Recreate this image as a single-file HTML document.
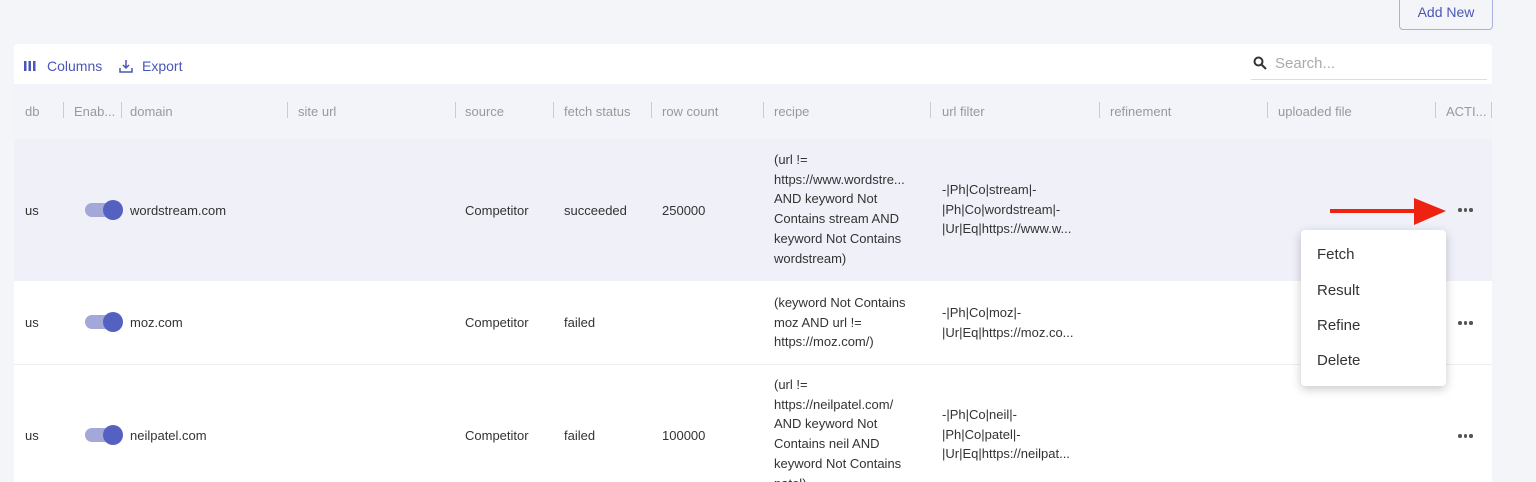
<!DOCTYPE html><html><head><style>
html,body{margin:0;width:1536px;height:482px;overflow:hidden}
body{background:#f4f5f9;font-family:"Liberation Sans",sans-serif;font-size:13px;color:#333;position:relative}
.a{position:absolute;white-space:nowrap}
.card{position:absolute;left:14px;top:44px;width:1478px;height:460px;background:#fff;border-radius:4px}
.hd{color:#999}
.sep{position:absolute;top:102px;width:1px;height:16px;background:#ccc}
.tg{position:absolute;width:36px;height:14px;border-radius:7px;background:#a3a8d8}
.tg:after{content:"";position:absolute;right:-2px;top:-3px;width:20px;height:20px;border-radius:50%;background:#5561c0}
.ml{position:absolute;line-height:19.7px;white-space:nowrap}
.dots{position:absolute;width:16px;height:4px}
.dots i{position:absolute;top:0;width:3.5px;height:3.5px;border-radius:50%;background:#555}
</style></head><body>
<div class="a" style="left:1399px;top:-4px;width:92px;height:32px;border:1px solid #aab0e0;border-radius:4px;color:#4a56b8;font-size:14px;text-align:center;line-height:30px;background:#f4f5f9">Add New</div>
<div class="card"></div>
<div class="a" style="left:14px;top:84px;width:1478px;height:55px;background:#f3f4f9"></div>
<div class="a" style="left:14px;top:139px;width:1478px;height:142px;background:#eff0f8"></div>
<div class="a" style="left:14px;top:364px;width:1478px;height:1px;background:#eee"></div>
<svg class="a" style="left:23px;top:60px" width="14" height="12"><rect x="1" y="1" width="2.5" height="10" fill="#4a56b8"/><rect x="5.5" y="1" width="2.5" height="10" fill="#4a56b8"/><rect x="10" y="1" width="2.5" height="10" fill="#4a56b8"/></svg>
<div class="a" style="left:47px;top:58px;color:#4a56b8;font-size:14px">Columns</div>
<svg class="a" style="left:118px;top:58px" width="16" height="16" viewBox="0 0 16 16" fill="none" stroke="#4a56b8" stroke-width="1.5"><path d="M8 2v8M5 7l3 3 3-3M2 10v4h12v-4"/></svg>
<div class="a" style="left:142px;top:58px;color:#4a56b8;font-size:14px">Export</div>
<svg class="a" style="left:1253px;top:56px" width="14" height="14" viewBox="0 0 14 14" fill="none" stroke="#333" stroke-width="2"><circle cx="5.5" cy="5.5" r="4"/><path d="M8.5 8.5L13 13"/></svg>
<div class="a" style="left:1275px;top:55px;color:#aaa;font-size:15px">Search...</div>
<div class="a" style="left:1251px;top:79px;width:236px;height:1px;background:#ddd"></div>
<div class="a hd" style="left:25px;top:104px">db</div>
<div class="a hd" style="left:74px;top:104px">Enab...</div>
<div class="a hd" style="left:130px;top:104px">domain</div>
<div class="a hd" style="left:298px;top:104px">site url</div>
<div class="a hd" style="left:465px;top:104px">source</div>
<div class="a hd" style="left:564px;top:104px">fetch status</div>
<div class="a hd" style="left:662px;top:104px">row count</div>
<div class="a hd" style="left:774px;top:104px">recipe</div>
<div class="a hd" style="left:942px;top:104px">url filter</div>
<div class="a hd" style="left:1110px;top:104px">refinement</div>
<div class="a hd" style="left:1278px;top:104px">uploaded file</div>
<div class="a hd" style="left:1446px;top:104px">ACTI...</div>
<div class="sep" style="left:63px"></div><div class="sep" style="left:121px"></div><div class="sep" style="left:287px"></div><div class="sep" style="left:455px"></div><div class="sep" style="left:553px"></div><div class="sep" style="left:651px"></div><div class="sep" style="left:763px"></div><div class="sep" style="left:930px"></div><div class="sep" style="left:1099px"></div><div class="sep" style="left:1267px"></div><div class="sep" style="left:1435px"></div><div class="sep" style="left:1491px"></div>

<div class="a" style="left:25px;top:203px">us</div><div class="tg" style="left:85px;top:203px"></div>
<div class="a" style="left:130px;top:203px">wordstream.com</div><div class="a" style="left:465px;top:203px">Competitor</div><div class="a" style="left:564px;top:203px">succeeded</div><div class="a" style="left:662px;top:203px">250000</div>
<div class="ml" style="left:774px;top:150px">(url !=<br>https://www.wordstre...<br>AND keyword Not<br>Contains stream AND<br>keyword Not Contains<br>wordstream)</div>
<div class="ml" style="left:942px;top:180px">-|Ph|Co|stream|-<br>|Ph|Co|wordstream|-<br>|Ur|Eq|https://www.w...</div>
<div class="dots" style="left:1458px;top:208px"><i style="left:0"></i><i style="left:5.5px"></i><i style="left:11px"></i></div>

<div class="a" style="left:25px;top:315px">us</div><div class="tg" style="left:85px;top:315px"></div>
<div class="a" style="left:130px;top:315px">moz.com</div><div class="a" style="left:465px;top:315px">Competitor</div><div class="a" style="left:564px;top:315px">failed</div>
<div class="ml" style="left:774px;top:293px">(keyword Not Contains<br>moz AND url !=<br>https://moz.com/)</div>
<div class="ml" style="left:942px;top:303px">-|Ph|Co|moz|-<br>|Ur|Eq|https://moz.co...</div>
<div class="dots" style="left:1458px;top:321px"><i style="left:0"></i><i style="left:5.5px"></i><i style="left:11px"></i></div>

<div class="a" style="left:25px;top:428px">us</div><div class="tg" style="left:85px;top:428px"></div>
<div class="a" style="left:130px;top:428px">neilpatel.com</div><div class="a" style="left:465px;top:428px">Competitor</div><div class="a" style="left:564px;top:428px">failed</div><div class="a" style="left:662px;top:428px">100000</div>
<div class="ml" style="left:774px;top:375px">(url !=<br>https://neilpatel.com/<br>AND keyword Not<br>Contains neil AND<br>keyword Not Contains<br>patel)</div>
<div class="ml" style="left:942px;top:405px">-|Ph|Co|neil|-<br>|Ph|Co|patel|-<br>|Ur|Eq|https://neilpat...</div>
<div class="dots" style="left:1458px;top:434px"><i style="left:0"></i><i style="left:5.5px"></i><i style="left:11px"></i></div>

<svg class="a" style="left:1330px;top:198px" width="116" height="28"><rect x="0" y="11" width="88" height="4" fill="#ee2211"/><path d="M84 0L116 13L84 27Z" fill="#ee2211"/></svg>
<div class="a" style="left:1301px;top:230px;width:145px;height:156px;background:#fff;border-radius:4px;box-shadow:0 3px 10px rgba(0,0,0,.22)"></div>
<div class="a" style="left:1317px;top:246px;font-size:15px">Fetch</div>
<div class="a" style="left:1317px;top:282px;font-size:15px">Result</div>
<div class="a" style="left:1317px;top:317px;font-size:15px">Refine</div>
<div class="a" style="left:1317px;top:352px;font-size:15px">Delete</div>
</body></html>
